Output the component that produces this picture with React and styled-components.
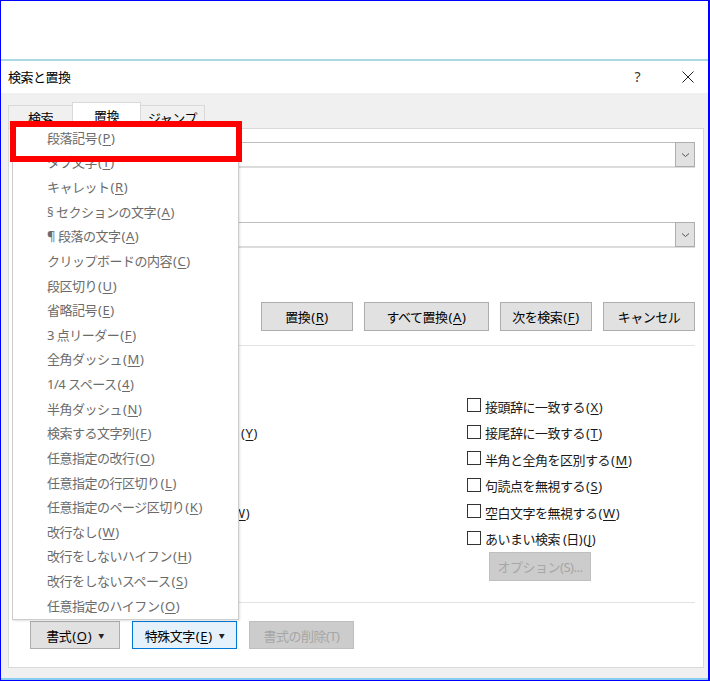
import React from "react";
import styled, { createGlobalStyle } from "styled-components";

const Global = createGlobalStyle`
  html, body { margin: 0; padding: 0; background: #fff; }
  body {
    font-family: "Noto Sans", "Noto Sans CJK JP", sans-serif;
    font-size: 13px;
    letter-spacing: -0.5px;
    color: #000;
  }
  * { box-sizing: border-box; }
`;

const Frame = styled.div`
  position: relative;
  width: 710px;
  height: 681px;
  border-left: 1px solid #0000ff;
  border-right: 2px solid #0000ff;
  border-top: 1px solid #0000ff;
  border-bottom: 1px solid #0000ff;
  display: flex;
  flex-direction: column;
  overflow: hidden;
`;

const TopBlank = styled.div`
  height: 60px;
  background: #fff;
  border-bottom: 2px solid #a9d9e2;
  flex: none;
`;

const TitleBar = styled.div`
  height: 32px;
  flex: none;
  display: flex;
  align-items: center;
  padding: 0 14px 0 7px;
  background: #fff;
`;

const Title = styled.div`
  flex: 1;
  font-size: 13px;
  line-height: 1;
`;

const Help = styled.span`
  font-size: 14px;
  color: #333;
  margin-right: 42px;
  line-height: 1;
`;

const Body = styled.div`
  flex: 1;
  background: #f0f0f0;
  padding: 9px 4px 10px 7px;
  border-bottom: 2px solid #88cdf0;
  display: flex;
  flex-direction: column;
`;

const TabStrip = styled.div`
  display: flex;
  align-items: flex-end;
  height: 27px;
  margin-bottom: -1px;
  position: relative;
  z-index: 1;
`;

const Tab = styled.div`
  width: ${(p) => p.$w}px;
  height: ${(p) => (p.$active ? 27 : 24)}px;
  margin-left: ${(p) => (p.$first ? 0 : -1)}px;
  background: ${(p) => (p.$active ? "#fff" : "#f0f0f0")};
  border: 1px solid #d9d9d9;
  border-bottom: ${(p) => (p.$active ? "none" : "1px solid #d9d9d9")};
  display: flex;
  align-items: center;
  justify-content: center;
  position: relative;
  z-index: ${(p) => (p.$active ? 2 : 1)};
  padding-bottom: ${(p) => (p.$active ? 2 : 0)}px;
`;

const Panel = styled.div`
  height: 540px;
  background: #fff;
  border: 1px solid #d9d9d9;
  padding: 13px 8px 18px 9px;
  display: flex;
  flex-direction: column;
`;

const FieldRow = styled.div`
  height: 26px;
  display: flex;
  align-items: center;
`;

const FieldLabel = styled.div`
  width: 112px;
`;

const Combo = styled.div`
  flex: 1;
  height: 26px;
  display: flex;
  border-top: 1px solid #bdbdbd;
  border-left: 1px solid #d0d0d0;
  border-bottom: 2px solid #dcdcdc;
  background: #fff;
`;

const ComboInput = styled.div`
  flex: 1;
`;

const ComboButton = styled.div`
  width: 20px;
  margin-top: -1px;
  margin-bottom: -1px;
  background: #e1e1e1;
  border: 1px solid #adadad;
  display: flex;
  align-items: center;
  justify-content: center;
`;

const InfoLine = styled.div`
  height: 54px;
  display: flex;
  align-items: center;
`;

const InfoValue = styled.span`
  margin-left: 30px;
`;

const ButtonRow = styled.div`
  margin-top: 54px;
  display: flex;
  align-items: center;
  gap: 11px;
`;

const Spacer = styled.div`
  flex: 1;
`;

const Button = styled.div`
  width: ${(p) => p.$w}px;
  height: ${(p) => p.$h || 29}px;
  flex: none;
  display: flex;
  align-items: center;
  justify-content: center;
  gap: 6px;
  background: ${(p) => (p.$disabled ? "#cccccc" : p.$focus ? "#e5f1fb" : "#e1e1e1")};
  border: 1px solid ${(p) => (p.$disabled ? "#bfbfbf" : p.$focus ? "#0078d7" : "#adadad")};
  color: ${(p) => (p.$disabled ? "#a6a6a6" : "#000")};
`;

const Separator = styled.div`
  height: 1px;
  background: #e3e3e3;
  margin-top: ${(p) => p.$mt}px;
  flex: none;
`;

const SectionHead = styled.div`
  height: 47px;
  padding-left: 8px;
  display: flex;
  flex-direction: column;
  justify-content: center;
  gap: 4px;
`;

const DirRow = styled.div`
  display: flex;
  align-items: center;
  gap: 20px;
`;

const SmallSelect = styled.div`
  width: 80px;
  height: 20px;
  border: 1px solid #adadad;
  background: #e1e1e1;
  padding-left: 4px;
  line-height: 18px;
`;

const OptionsGrid = styled.div`
  display: grid;
  grid-template-columns: 445px 1fr;
  padding-left: 4px;
`;

const Column = styled.div`
  display: flex;
  flex-direction: column;
`;

const CheckRow = styled.div`
  height: 26.5px;
  display: flex;
  align-items: center;
  gap: 4px;
  white-space: nowrap;
  color: #1a1a1a;
`;

const Box = styled.span`
  width: 14px;
  height: 14px;
  flex: none;
  border: 1px solid #333;
  background: #fff;
  margin-top: -2px;
`;

const OptionButtonWrap = styled.div`
  padding-left: 22px;
`;

const BottomRow = styled.div`
  margin-top: 18px;
  padding-left: 12px;
  display: flex;
  gap: 12px;
`;

const Caret = styled.span`
  font-size: 6px;
  color: #222;
  margin-top: 1px;
`;

const Paren = styled.span`
  letter-spacing: 0.6px;
  margin-left: 1px;
`;

const Key = styled.u`
  text-decoration: underline;
  text-underline-offset: 2px;
`;

const Menu = styled.div`
  position: absolute;
  left: 11px;
  top: 120px;
  width: 227px;
  height: 499px;
  background: #fff;
  border: 1px solid #cccccc;
  box-shadow: 1px 1px 2px rgba(0, 0, 0, 0.12);
  padding-top: 3px;
  z-index: 10;
`;

const MenuItem = styled.div`
  height: 24.63px;
  display: flex;
  align-items: center;
  padding-left: 34px;
  color: #6b6b6b;
  white-space: nowrap;
`;

const Highlight = styled.div`
  position: absolute;
  left: 9px;
  top: 120px;
  width: 232px;
  height: 41px;
  border: 6px solid #ff0000;
  z-index: 11;
`;

const Chevron = () => (
  <svg width="9" height="6" viewBox="0 0 9 6">
    <path d="M1 1.5 L4.5 4.5 L8 1.5" fill="none" stroke="#555" strokeWidth="1" />
  </svg>
);

const CloseIcon = () => (
  <svg width="12" height="12" viewBox="0 0 12 12">
    <path d="M0.5 0.5 L11.5 11.5 M11.5 0.5 L0.5 11.5" stroke="#222" strokeWidth="1" />
  </svg>
);

const L = ({ t, k, after = "" }) => (
  <span>
    {t}
    <Paren>
      (<Key>{k}</Key>)
    </Paren>
    {after}
  </span>
);

const menuItems = [
  ["段落記号", "P"],
  ["タブ文字", "T"],
  ["キャレット", "R"],
  ["§ セクションの文字", "A"],
  ["¶ 段落の文字", "A"],
  ["クリップボードの内容", "C"],
  ["段区切り", "U"],
  ["省略記号", "E"],
  ["3 点リーダー", "F"],
  ["全角ダッシュ", "M"],
  ["1/4 スペース", "4"],
  ["半角ダッシュ", "N"],
  ["検索する文字列", "F"],
  ["任意指定の改行", "O"],
  ["任意指定の行区切り", "L"],
  ["任意指定のページ区切り", "K"],
  ["改行なし", "W"],
  ["改行をしないハイフン", "H"],
  ["改行をしないスペース", "S"],
  ["任意指定のハイフン", "O"],
];

const leftChecks = [
  ["大文字と小文字を区別する", "H"],
  ["完全に一致する単語だけを検索する", "Y"],
  ["ワイルドカードを使用する", "U"],
  ["あいまい検索 (英)", "K"],
  ["英単語の異なる活用形も検索する", "W"],
];

const rightChecks = [
  ["接頭辞に一致する", "X"],
  ["接尾辞に一致する", "T"],
  ["半角と全角を区別する", "M"],
  ["句読点を無視する", "S"],
  ["空白文字を無視する", "W"],
  ["あいまい検索 (日)", "J"],
];

export default function App() {
  return (
    <>
      <Global />
      <Frame>
        <TopBlank />
        <TitleBar>
          <Title>検索と置換</Title>
          <Help>?</Help>
          <CloseIcon />
        </TitleBar>
        <Body>
          <TabStrip>
            <Tab $w={65} $first>検索</Tab>
            <Tab $w={69} $active>置換</Tab>
            <Tab $w={65}>ジャンプ</Tab>
          </TabStrip>
          <Panel>
            <FieldRow>
              <FieldLabel>
                <L t="検索する文字列" k="N" after=":" />
              </FieldLabel>
              <Combo>
                <ComboInput />
                <ComboButton>
                  <Chevron />
                </ComboButton>
              </Combo>
            </FieldRow>
            <InfoLine>
              オプション:<InfoValue>あいまい検索 (日)</InfoValue>
            </InfoLine>
            <FieldRow>
              <FieldLabel>
                <L t="置換後の文字列" k="I" after=":" />
              </FieldLabel>
              <Combo>
                <ComboInput />
                <ComboButton>
                  <Chevron />
                </ComboButton>
              </Combo>
            </FieldRow>
            <ButtonRow>
              <Button $w={90}>
                <L t="<< オプション" k="L" />
              </Button>
              <Spacer />
              <Button $w={92}>
                <L t="置換" k="R" />
              </Button>
              <Button $w={125}>
                <L t="すべて置換" k="A" />
              </Button>
              <Button $w={92}>
                <L t="次を検索" k="F" />
              </Button>
              <Button $w={92}>キャンセル</Button>
            </ButtonRow>
            <Separator $mt={14} />
            <SectionHead>
              <span>検索オプション</span>
              <DirRow>
                <L t="検索方向" k=":" />
                <SmallSelect>文書全体</SmallSelect>
              </DirRow>
            </SectionHead>
            <OptionsGrid>
              <Column>
                {leftChecks.map(([t, k]) => (
                  <CheckRow key={t}>
                    <Box />
                    <L t={t} k={k} />
                  </CheckRow>
                ))}
              </Column>
              <Column>
                {rightChecks.map(([t, k]) => (
                  <CheckRow key={t}>
                    <Box />
                    <L t={t} k={k} />
                  </CheckRow>
                ))}
                <OptionButtonWrap>
                  <Button $w={102} $disabled>
                    オプション(S)...
                  </Button>
                </OptionButtonWrap>
              </Column>
            </OptionsGrid>
            <Separator $mt={21} />
            <BottomRow>
              <Button $w={90} $h={28}>
                <L t="書式" k="O" />
                <Caret>▼</Caret>
              </Button>
              <Button $w={105} $h={28} $focus>
                <L t="特殊文字" k="E" />
                <Caret>▼</Caret>
              </Button>
              <Button $w={105} $h={28} $disabled>
                書式の削除(T)
              </Button>
            </BottomRow>
          </Panel>
        </Body>
        <Menu>
          {menuItems.map(([t, k], i) => (
            <MenuItem key={i}>
              <L t={t} k={k} />
            </MenuItem>
          ))}
        </Menu>
        <Highlight />
      </Frame>
    </>
  );
}
